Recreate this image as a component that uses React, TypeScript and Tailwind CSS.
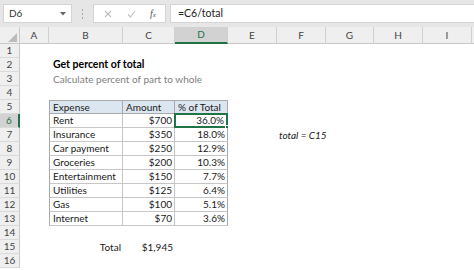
// Excel-style sheet: percent of total

const cols = ["A", "B", "C", "D", "E", "F", "G", "H", "I"];

const rows = [
  { name: "Rent", amount: "$700", pct: "36.0%" },
  { name: "Insurance", amount: "$350", pct: "18.0%" },
  { name: "Car payment", amount: "$250", pct: "12.9%" },
  { name: "Groceries", amount: "$200", pct: "10.3%" },
  { name: "Entertainment", amount: "$150", pct: "7.7%" },
  { name: "Utilities", amount: "$125", pct: "6.4%" },
  { name: "Gas", amount: "$100", pct: "5.1%" },
  { name: "Internet", amount: "$70", pct: "3.6%" },
];

const grid =
  "grid grid-cols-[20px_29px_74px_52px_53px_49px_49px_48px_49px_49px_1fr]";

function RowHead({ n, active }: { n: number; active?: boolean }) {
  return (
    <div
      className={`h-[14px] flex items-center justify-center text-[10px] border-b border-[#dadada] ${
        active
          ? "bg-[#d2d2d2] text-[#217346] border-r-2 border-r-[#217346]"
          : "bg-[#efefef] text-[#444] border-r border-r-[#c8c8c8]"
      }`}
    >
      {n}
    </div>
  );
}

export default function App() {
  const font = { fontFamily: "Lato, 'Open Sans', sans-serif" };
  return (
    <div className="w-[474px] h-[270px] overflow-hidden bg-white" style={font}>
      {/* Formula bar */}
      <div className="h-[27px] bg-[#e6e6e6] flex items-start pt-[4px] pl-[3px] gap-0">
        <div className="w-[69px] h-[19px] bg-white border border-[#d4d4d4] flex items-center justify-between px-[5px] text-[10px] text-[#333]">
          <span>D6</span>
          <svg width="6" height="4" viewBox="0 0 6 4">
            <path d="M0 0 L6 0 L3 3.5 Z" fill="#666" />
          </svg>
        </div>
        <div className="w-[21px] h-[19px] flex flex-col items-center justify-center gap-[2px]">
          <div className="w-[1px] h-[2px] bg-[#aaa]" />
          <div className="w-[1px] h-[2px] bg-[#aaa]" />
          <div className="w-[1px] h-[2px] bg-[#aaa]" />
        </div>
        <div className="w-[73px] h-[19px] bg-white border border-[#d4d4d4] flex items-center text-[#bbb]">
          <svg className="ml-[10px]" width="8" height="8" viewBox="0 0 8 8">
            <path d="M1 1 L7 7 M7 1 L1 7" stroke="#bdbdbd" strokeWidth="1.1" />
          </svg>
          <svg className="ml-[15px]" width="9" height="8" viewBox="0 0 9 8">
            <path d="M1 4.5 L3.5 7 L8 1" stroke="#bdbdbd" strokeWidth="1.1" fill="none" />
          </svg>
          <span
            className="ml-[14px] text-[10px] italic text-[#555]"
            style={{ fontFamily: "'Liberation Serif', serif" }}
          >
            f<span className="text-[7px]">x</span>
          </span>
        </div>
        <div className="ml-[4px] flex-1 h-[19px] bg-white border-y border-l border-[#d4d4d4] flex items-center pl-[7px] text-[10.5px] text-[#222]">
          =C6/total
        </div>
      </div>

      {/* Column headers */}
      <div className={`${grid} h-[17px] bg-[#efefef] border-b border-[#c8c8c8]`}>
        <div className="relative border-r border-[#c8c8c8]">
          <svg className="absolute right-[2px] bottom-[2px]" width="9" height="9" viewBox="0 0 9 9">
            <path d="M9 0 L9 9 L0 9 Z" fill="#bcbcbc" />
          </svg>
        </div>
        {cols.map((c) => (
          <div
            key={c}
            className={`flex items-center justify-center text-[10px] border-r border-[#d0d0d0] ${
              c === "D"
                ? "bg-[#d2d2d2] text-[#217346] border-b-2 border-b-[#217346]"
                : "text-[#444]"
            }`}
          >
            {c}
          </div>
        ))}
        <div />
      </div>

      {/* Sheet */}
      <div className="text-[10px] text-[#1a1a1a]">
        <div className={grid}>
          <RowHead n={1} />
        </div>
        <div className={grid}>
          <RowHead n={2} />
          <div />
          <div className="col-span-3 h-[14px] flex items-center pl-[4px] font-bold text-[10.5px] text-black whitespace-nowrap">
            Get percent of total
          </div>
        </div>
        <div className={grid}>
          <RowHead n={3} />
          <div />
          <div className="col-span-4 h-[14px] flex items-center pl-[4px] text-[10px] text-[#808080] whitespace-nowrap">
            Calculate percent of part to whole
          </div>
        </div>
        <div className={grid}>
          <RowHead n={4} />
        </div>

        {/* Table header */}
        <div className={grid}>
          <RowHead n={5} />
          <div />
          <div className="h-[14px] bg-[#dce6f1] border border-[#a9a9a9] flex items-center pl-[3px]">
            Expense
          </div>
          <div className="h-[14px] bg-[#dce6f1] border-y border-r border-[#a9a9a9] flex items-center pl-[3px]">
            Amount
          </div>
          <div className="h-[14px] bg-[#dce6f1] border-y border-r border-[#a9a9a9] flex items-center pl-[3px]">
            % of Total
          </div>
        </div>

        {rows.map((r, i) => (
          <div key={r.name} className={grid}>
            <RowHead n={6 + i} active={i === 0} />
            <div />
            <div className="h-[14px] border-x border-b border-[#c6c6c6] border-l-[#a9a9a9] flex items-center pl-[3px] whitespace-nowrap">
              {r.name}
            </div>
            <div className="h-[14px] border-r border-b border-[#c6c6c6] flex items-center justify-end pr-[2px]">
              {r.amount}
            </div>
            <div
              className={`relative h-[14px] flex items-center justify-end pr-[2px] ${
                i === 0
                  ? "border-2 border-[#217346] -mt-[1px] h-[15px] -ml-[1px]"
                  : "border-r border-b border-[#c6c6c6] border-r-[#a9a9a9]"
              }`}
            >
              {r.pct}
              {i === 0 && (
                <div className="absolute -right-[3px] -bottom-[3px] w-[4px] h-[4px] bg-[#217346] border border-white" />
              )}
            </div>
            {i === 1 && (
              <>
                <div />
                <div className="h-[14px] flex items-center pl-[2px] italic whitespace-nowrap">
                  total = C15
                </div>
              </>
            )}
          </div>
        ))}

        <div className={grid}>
          <RowHead n={14} />
        </div>
        <div className={grid}>
          <RowHead n={15} />
          <div />
          <div className="h-[14px] flex items-center justify-end pr-[2px]">Total</div>
          <div className="h-[14px] flex items-center justify-end pr-[2px]">$1,945</div>
        </div>
        <div className={grid}>
          <RowHead n={16} />
        </div>
      </div>
    </div>
  );
}
